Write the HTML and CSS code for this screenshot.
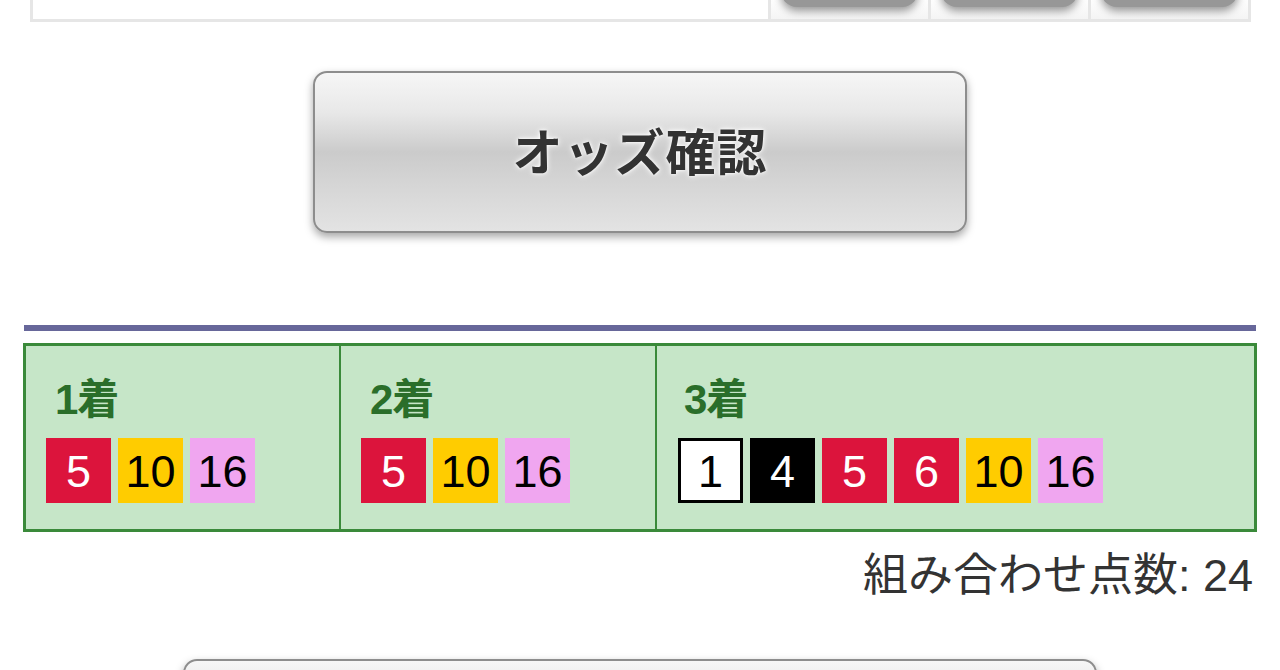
FILE: index.html
```html
<!DOCTYPE html>
<html lang="ja">
<head>
<meta charset="utf-8">
<title>オッズ確認</title>
<link rel="stylesheet" href="styles.css">
</head>
<body>
<div class="top-table">
  <div class="top-main"></div>
  <div class="top-cell"><div class="top-btn"></div></div>
  <div class="top-cell"><div class="top-btn"></div></div>
  <div class="top-cell"><div class="top-btn"></div></div>
</div>

<div class="odds-wrap">
  <button class="gloss-btn odds-btn">オッズ確認</button>
</div>

<div class="rule"></div>

<div class="result">
  <div class="col col-1">
    <div class="label">1着</div>
    <div class="nums">
      <span class="num red">5</span><span class="num yellow">10</span><span class="num pink">16</span>
    </div>
  </div>
  <div class="col col-2">
    <div class="label">2着</div>
    <div class="nums">
      <span class="num red">5</span><span class="num yellow">10</span><span class="num pink">16</span>
    </div>
  </div>
  <div class="col col-3">
    <div class="label">3着</div>
    <div class="nums">
      <span class="num white">1</span><span class="num black">4</span><span class="num red">5</span><span class="num red">6</span><span class="num yellow">10</span><span class="num pink">16</span>
    </div>
  </div>
</div>

<div class="count">組み合わせ点数: 24</div>

<div class="bottom-wrap">
  <div class="gloss-btn bottom-btn"></div>
</div>
</body>
</html>
```

FILE: styles.css
```css
* { box-sizing: border-box; }
html, body {
  margin: 0;
  padding: 0;
  background: #fff;
  overflow: hidden;
  height: 670px;
}
body {
  font-family: "Liberation Sans", "Noto Sans CJK JP", sans-serif;
  color: #333;
}

.top-table {
  display: flex;
  height: 80px;
  margin: -58px 29px 0 30px;
  border: 3px solid #e6e6e6;
  background: #fff;
}
.top-main { flex: 1; }
.top-cell {
  width: 160px;
  border-left: 3px solid #e6e6e6;
  padding: 0 10px;
  background: linear-gradient(#fff 70%, #f4f4f4);
}
.top-btn {
  height: 62px;
  border-radius: 0 0 16px 16px;
  background: #979797;
  box-shadow: 0 4px 8px rgba(0,0,0,0.4);
}

.odds-wrap {
  display: flex;
  justify-content: center;
  margin-top: 49px;
}
.gloss-btn {
  border: 2px solid #8d8d8d;
  border-radius: 14px;
  background: linear-gradient(#f6f6f6 0%, #e8e8e8 25%, #cbcbcb 50%, #d5d5d5 70%, #e3e3e3 100%);
  box-shadow: 0 4px 8px rgba(0,0,0,0.35);
}
.odds-btn {
  width: 654px;
  height: 162px;
  font-family: "Noto Sans CJK JP", sans-serif;
  font-weight: 700;
  font-size: 50px;
  color: #333;
  text-shadow: 0 0 6px #fff, 0 0 3px #fff;
  padding: 0 0 6px;
  letter-spacing: 1px;
}

.rule {
  height: 6px;
  margin: 92px 24px 0;
  background: #67679a;
}

.result {
  display: flex;
  margin: 12px 23px 0;
  border: 3px solid #3a8a3a;
  background: #c6e6c8;
}
.col {
  padding: 30px 0 26px 20px;
}
.col-1 { width: 315px; border-right: 2px solid #3a8a3a; }
.col-2 { width: 316px; border-right: 2px solid #3a8a3a; padding-left: 20px; }
.col-3 { flex: 1; padding-left: 21px; }
.label {
  font-family: "Liberation Sans", "Noto Sans CJK JP", sans-serif;
  font-weight: 700;
  font-size: 42px;
  line-height: 48px;
  color: #2a6e2a;
  padding-left: 9px;
  margin-bottom: 14px;
  letter-spacing: -1px;
}
.col-3 .label { padding-left: 6px; }
.nums {
  display: flex;
  gap: 7px;
}
.num {
  width: 65px;
  height: 65px;
  font-family: "Liberation Sans", sans-serif;
  font-size: 45px;
  line-height: 67px;
  text-align: center;
}
.red { background: #dc143c; color: #fff; }
.yellow { background: #ffcc00; color: #000; }
.pink { background: #f0a6f0; color: #000; }
.black { background: #000; color: #fff; }
.white { background: #fff; color: #000; border: 3px solid #000; line-height: 61px; }

.count {
  text-align: right;
  padding-right: 27px;
  margin-top: 16px;
  font-family: "Liberation Sans", "Noto Sans CJK JP", sans-serif;
  font-size: 45px;
  line-height: 56px;
  color: #333;
}

.bottom-wrap {
  display: flex;
  justify-content: center;
  margin-top: 55px;
}
.bottom-btn {
  width: 914px;
  height: 120px;
}
```
